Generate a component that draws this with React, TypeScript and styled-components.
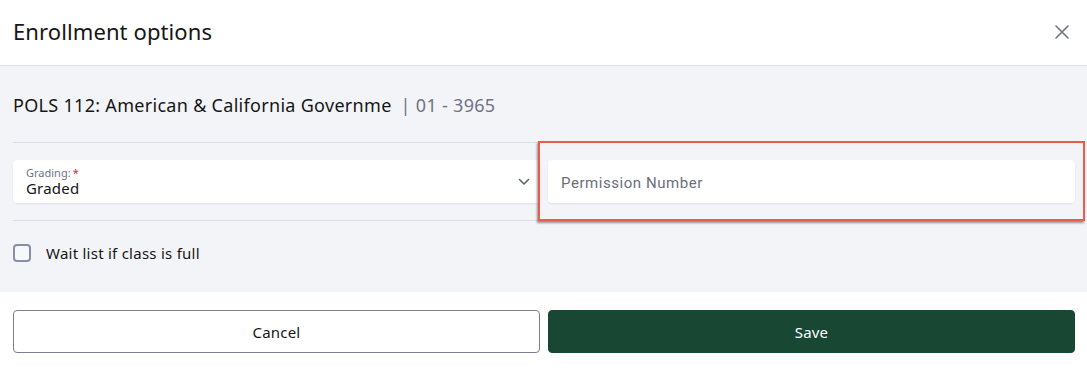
import React from 'react';
import styled, { createGlobalStyle } from 'styled-components';

const GlobalStyle = createGlobalStyle`
  html, body {
    margin: 0;
    padding: 0;
    background: #ffffff;
    font-family: 'Noto Sans', 'Open Sans', Arial, sans-serif;
    color: #161616;
  }
`;

const Modal = styled.div`
  width: 1087px;
  height: 369px;
  background: #fff;
  position: relative;
  overflow: hidden;
`;

const Header = styled.div`
  height: 66px;
  display: flex;
  align-items: center;
  justify-content: space-between;
  padding: 0 13px 3px;
  border-bottom: 1px solid #dfe1e6;
  box-sizing: border-box;
  box-shadow: 0 1px 2px rgba(0, 0, 0, 0.05);

  h2 {
    margin: 0;
    font-size: 22px;
    font-weight: 400;
    color: #161616;
    letter-spacing: 0.1px;
  }
`;

const CloseBtn = styled.button`
  border: none;
  background: none;
  padding: 0;
  margin-right: 2px;
  margin-top: 1px;
  width: 20px;
  height: 20px;
  display: flex;
  align-items: center;
  justify-content: center;
  color: #6f7385;
  cursor: pointer;
`;

const Body = styled.div`
  background: #f3f4f8;
  height: 226px;
  padding: 0 12px 0 13px;
  box-sizing: border-box;
`;

const CourseLine = styled.div`
  height: 77px;
  display: flex;
  align-items: center;
  font-size: 18px;
  letter-spacing: 0.3px;
  color: #161616;
  padding-top: 1px;
  box-sizing: border-box;
  border-bottom: 1px solid #dcdee5;

  span {
    color: #6f7385;
    margin-left: 9px;
  }
`;

const FieldRow = styled.div`
  display: grid;
  grid-template-columns: 1fr 1fr;
  column-gap: 8px;
  padding: 17px 0;
`;

const FieldBox = styled.div`
  height: 43px;
  background: #fff;
  border-radius: 4px;
  box-shadow: 0 1px 2px rgba(20, 30, 60, 0.08);
  box-sizing: border-box;
  position: relative;
  display: flex;
  flex-direction: column;
  justify-content: center;
  padding: 0 13px;
`;

const SelectLabel = styled.div`
  font-size: 11px;
  line-height: 13px;
  color: #6f7385;

  b {
    color: #d4264a;
    font-weight: 400;
    margin-left: 2px;
  }
`;

const SelectValue = styled.div`
  font-size: 15px;
  line-height: 19px;
  letter-spacing: 0.2px;
  color: #161616;
`;

const Chevron = styled.svg`
  position: absolute;
  right: 10px;
  top: 18px;
`;

const Placeholder = styled.div`
  font-family: Roboto, Arial, sans-serif;
  font-size: 15px;
  letter-spacing: 0.55px;
  color: #6b6e7a;
  padding-top: 2px;
`;

const Divider = styled.div<{ $half?: boolean }>`
  height: 1px;
  background: #dcdee5;
  width: ${(p) => (p.$half ? '527px' : '100%')};
`;

const CheckRow = styled.label`
  display: flex;
  align-items: center;
  gap: 15px;
  padding-top: 22px;
  font-size: 15px;
  letter-spacing: 0.25px;
  color: #161616;
`;

const CheckBox = styled.span`
  width: 18px;
  height: 18px;
  box-sizing: border-box;
  border: 2px solid #8a8ea3;
  border-radius: 4px;
  background: #f7f8fb;
`;

const Footer = styled.div`
  display: grid;
  grid-template-columns: 1fr 1fr;
  column-gap: 8px;
  padding: 18px 12px 0 13px;
`;

const Button = styled.button<{ $primary?: boolean }>`
  height: 43px;
  border-radius: 4px;
  font-family: 'Noto Sans', 'Open Sans', Arial, sans-serif;
  font-size: 15px;
  letter-spacing: 0.2px;
  cursor: pointer;
  border: 1px solid ${(p) => (p.$primary ? '#184834' : '#7b7f94')};
  background: ${(p) => (p.$primary ? '#184834' : '#ffffff')};
  color: ${(p) => (p.$primary ? '#ffffff' : '#161616')};
`;

const Highlight = styled.div`
  position: absolute;
  left: 538px;
  top: 141px;
  width: 547px;
  height: 80px;
  box-sizing: border-box;
  border: 2px solid #ec5a4b;
  box-shadow: -1px 2px 2px rgba(60, 60, 60, 0.55);
  pointer-events: none;
`;

export default function App() {
  return (
    <>
      <GlobalStyle />
      <Modal>
        <Header>
          <h2>Enrollment options</h2>
          <CloseBtn aria-label="Close">
            <svg width="16" height="16" viewBox="0 0 16 16" fill="none">
              <path d="M2 2L14 14M14 2L2 14" stroke="currentColor" strokeWidth="1.6" strokeLinecap="round" />
            </svg>
          </CloseBtn>
        </Header>
        <Body>
          <CourseLine>
            POLS 112: American &amp; California Governme<span>| 01 - 3965</span>
          </CourseLine>
          <FieldRow>
            <FieldBox>
              <SelectLabel>
                Grading:<b>*</b>
              </SelectLabel>
              <SelectValue>Graded</SelectValue>
              <Chevron width="12" height="8" viewBox="0 0 12 8" fill="none">
                <path d="M1.5 1.5L6 6L10.5 1.5" stroke="#5f6375" strokeWidth="1.6" strokeLinecap="round" strokeLinejoin="round" />
              </Chevron>
            </FieldBox>
            <FieldBox>
              <Placeholder>Permission Number</Placeholder>
            </FieldBox>
          </FieldRow>
          <Divider $half />
          <CheckRow>
            <CheckBox />
            Wait list if class is full
          </CheckRow>
        </Body>
        <Footer>
          <Button>Cancel</Button>
          <Button $primary>Save</Button>
        </Footer>
        <Highlight />
      </Modal>
    </>
  );
}
